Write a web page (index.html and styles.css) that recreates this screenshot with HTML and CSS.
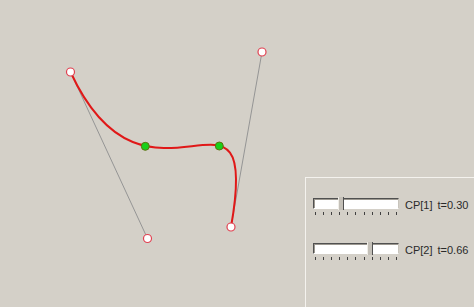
FILE: index.html
```html
<!DOCTYPE html>
<html>
<head>
<meta charset="utf-8">
<link rel="stylesheet" href="styles.css">
</head>
<body>
<div class="stage">
  <svg class="canvas" width="474" height="307" viewBox="0 0 474 307">
    <line class="guide" x1="70.5" y1="72" x2="147.5" y2="238.5"/>
    <line class="guide" x1="262" y1="52" x2="231" y2="227"/>
    <path class="curve" d="M70.5 72 C147.5 238.5 262 52 231 227"/>
    <circle class="cp" cx="70.5" cy="72" r="4"/>
    <circle class="cp" cx="147.5" cy="238.5" r="4"/>
    <circle class="cp" cx="262" cy="52" r="4"/>
    <circle class="cp" cx="231" cy="227" r="4"/>
    <circle class="pt" cx="145.3" cy="146.3" r="4"/>
    <circle class="pt" cx="219.3" cy="146" r="4"/>
  </svg>
  <div class="panel">
    <div class="row">
      <div class="slider">
        <div class="track"><div class="thumb" style="left:24px"></div></div>
        <div class="ticks"><i></i><i></i><i></i><i></i><i></i><i></i><i></i><i></i><i></i><i></i><i></i></div>
      </div>
      <span class="label">CP[1]</span><span class="value">t=0.30</span>
    </div>
    <div class="row">
      <div class="slider">
        <div class="track"><div class="thumb" style="left:53px"></div></div>
        <div class="ticks"><i></i><i></i><i></i><i></i><i></i><i></i><i></i><i></i><i></i><i></i><i></i></div>
      </div>
      <span class="label">CP[2]</span><span class="value">t=0.66</span>
    </div>
  </div>
</div>
</body>
</html>
```
FILE: styles.css
```css
html, body {
  margin: 0;
  padding: 0;
  background: #d4d0c8;
  overflow: hidden;
}
.stage {
  position: relative;
  width: 474px;
  height: 307px;
  font-family: "Liberation Sans", Arial, sans-serif;
}
.canvas {
  display: block;
}
.guide {
  stroke: #959595;
  stroke-width: 1;
}
.curve {
  fill: none;
  stroke: #e01818;
  stroke-width: 2;
}
.cp {
  fill: #ffffff;
  stroke: #e04050;
  stroke-width: 1.2;
}
.pt {
  fill: #18d018;
  stroke: #607010;
  stroke-width: 1;
}
.panel {
  position: absolute;
  left: 305px;
  top: 177px;
  right: 0;
  bottom: 0;
  border-top: 1px solid #f4f2ee;
  border-left: 1px solid #f4f2ee;
  padding: 20px 0 0 7px;
  display: flex;
  flex-direction: column;
  gap: 17px;
}
.row {
  display: flex;
  align-items: flex-start;
  height: 28px;
}
.slider {
  width: 86px;
  display: flex;
  flex-direction: column;
}
.track {
  position: relative;
  height: 9px;
  background: #ffffff;
  border-top: 1px solid #505050;
  border-left: 1px solid #505050;
  border-right: 1px solid #c8c4bc;
  border-bottom: 1px solid #ffffff;
  box-shadow: inset 1px 1px 0 #9c9890;
}
.thumb {
  position: absolute;
  top: -2px;
  width: 4px;
  height: 13px;
  background: #c4c0b8;
  border-right: 1px solid #505050;
  border-left: 1px solid #f0eee8;
}
.ticks {
  display: flex;
  justify-content: space-between;
  padding: 0 2px 0 2px;
  margin-top: 3px;
}
.ticks i {
  display: block;
  width: 1px;
  height: 3px;
  background: #404040;
}
.label {
  margin-left: 6px;
  font-size: 11px;
  line-height: 15px;
  color: #2a2a2a;
}
.value {
  margin-left: 5px;
  font-size: 11px;
  line-height: 15px;
  color: #2a2a2a;
}
```
